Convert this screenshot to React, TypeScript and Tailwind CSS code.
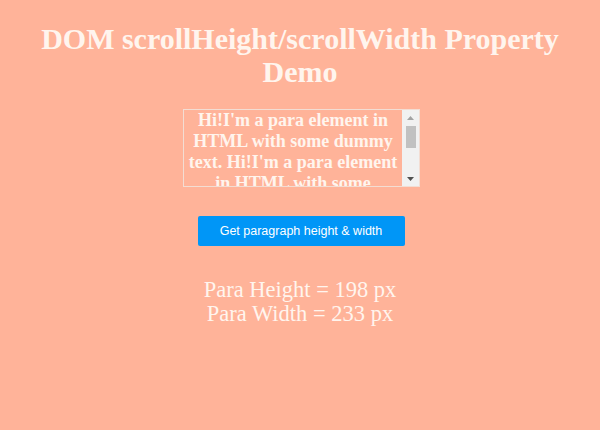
import React from "react";

const para =
  "Hi!I'm a para element in HTML with some dummy text. Hi!I'm a para element in HTML with some dummy text. Hi!I'm a para element in HTML with some dummy text. Hi!I'm a para element in HTML with some dummy text.";

export default function App() {
  return (
    <div className="min-h-[430px] w-full bg-[#ffb399] text-[#fff5ee] font-['Liberation_Serif',serif] flex flex-col items-center">
      <h1 className="mt-[22px] text-center text-[30px] font-bold leading-[33px] px-4">
        DOM scrollHeight/scrollWidth Property
        <br />
        Demo
      </h1>

      {/* scrolling paragraph with a classic scrollbar */}
      <div className="mt-[21px] ml-[3px] flex h-[78px] w-[237px] border border-[#f3ddd3] overflow-hidden">
        <p className="flex-1 text-center text-[18px] font-bold leading-[21px] px-[1px] pt-0">
          {para}
        </p>
        <div className="flex w-[17px] flex-col items-center bg-[#f1f1f1]">
          <div className="flex h-[15px] items-center justify-center">
            <svg width="7" height="4" viewBox="0 0 7 4">
              <path d="M3.5 0 L7 4 L0 4 Z" fill="#a3a3a3" />
            </svg>
          </div>
          <div className="mt-[1px] h-[22px] w-[10px] bg-[#c1c1c1]" />
          <div className="flex-1" />
          <div className="flex h-[15px] items-center justify-center">
            <svg width="7" height="4" viewBox="0 0 7 4">
              <path d="M0 0 L7 0 L3.5 4 Z" fill="#505050" />
            </svg>
          </div>
        </div>
      </div>

      <button className="mt-[29px] ml-[2px] h-[30px] w-[207px] rounded-[2px] bg-[#0096f7] font-['Liberation_Sans',Arial,sans-serif] text-[12.5px] text-white">
        Get paragraph height &amp; width
      </button>

      <div className="mt-[32px] text-center text-[22.5px] leading-[24px]">
        <div>Para Height = 198 px</div>
        <div>Para Width = 233 px</div>
      </div>
    </div>
  );
}
